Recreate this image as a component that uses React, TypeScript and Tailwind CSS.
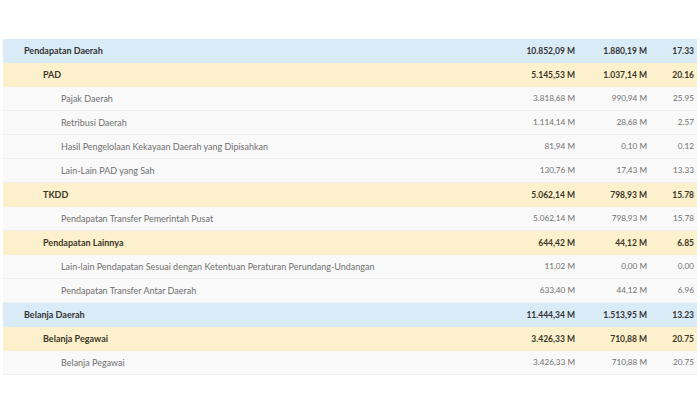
import React from "react";

type Row = { label: string; a: string; b: string; c: string; level: 0 | 1 | 2 };

const rows: Row[] = [
  { label: "Pendapatan Daerah", a: "10.852,09 M", b: "1.880,19 M", c: "17.33", level: 0 },
  { label: "PAD", a: "5.145,53 M", b: "1.037,14 M", c: "20.16", level: 1 },
  { label: "Pajak Daerah", a: "3.818,68 M", b: "990,94 M", c: "25.95", level: 2 },
  { label: "Retribusi Daerah", a: "1.114,14 M", b: "28,68 M", c: "2.57", level: 2 },
  { label: "Hasil Pengelolaan Kekayaan Daerah yang Dipisahkan", a: "81,94 M", b: "0,10 M", c: "0.12", level: 2 },
  { label: "Lain-Lain PAD yang Sah", a: "130,76 M", b: "17,43 M", c: "13.33", level: 2 },
  { label: "TKDD", a: "5.062,14 M", b: "798,93 M", c: "15.78", level: 1 },
  { label: "Pendapatan Transfer Pemerintah Pusat", a: "5.062,14 M", b: "798,93 M", c: "15.78", level: 2 },
  { label: "Pendapatan Lainnya", a: "644,42 M", b: "44,12 M", c: "6.85", level: 1 },
  { label: "Lain-lain Pendapatan Sesuai dengan Ketentuan Peraturan Perundang-Undangan", a: "11,02 M", b: "0,00 M", c: "0.00", level: 2 },
  { label: "Pendapatan Transfer Antar Daerah", a: "633,40 M", b: "44,12 M", c: "6.96", level: 2 },
  { label: "Belanja Daerah", a: "11.444,34 M", b: "1.513,95 M", c: "13.23", level: 0 },
  { label: "Belanja Pegawai", a: "3.426,33 M", b: "710,88 M", c: "20.75", level: 1 },
  { label: "Belanja Pegawai", a: "3.426,33 M", b: "710,88 M", c: "20.75", level: 2 },
];

function TableRow({ r }: { r: Row }) {
  const rowCls =
    r.level === 0
      ? "bg-[#d9ebf6] text-[#333333] font-bold"
      : r.level === 1
      ? "bg-[#fcf1cc] text-[#3b3727] font-bold"
      : "bg-[#f9f9f9] text-[#707070] border-b border-[#efefef]";
  const pad = r.level === 0 ? "pl-[21px]" : r.level === 1 ? "pl-[40px]" : "pl-[58px]";
  const num = r.level === 2 ? "text-[8.2px]" : "text-[8.5px]";
  return (
    <div className={`grid grid-cols-[1fr_90px_72px_47px] pr-[3px] h-[24px] items-center ${rowCls}`}>
      <div className={`${pad} whitespace-nowrap text-[9px]`}>{r.label}</div>
      <div className={`text-right ${num}`}>{r.a}</div>
      <div className={`text-right ${num}`}>{r.b}</div>
      <div className={`text-right ${num}`}>{r.c}</div>
    </div>
  );
}

export default function App() {
  return (
    <div className="w-[700px] h-[393px] bg-white pt-[39px] px-[3px] font-['Lato',sans-serif]">
      <div className="flex flex-col">
        {rows.map((r, i) => (
          <TableRow key={i} r={r} />
        ))}
      </div>
    </div>
  );
}
